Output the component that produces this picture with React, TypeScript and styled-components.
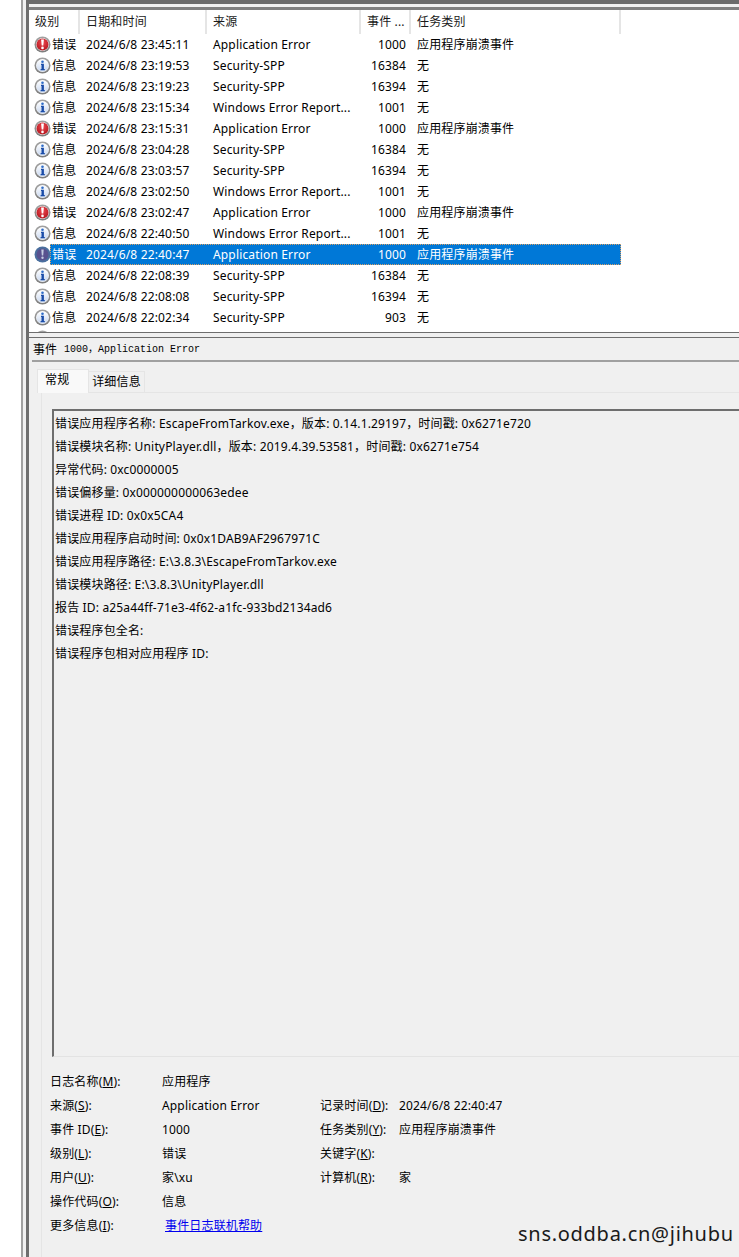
import styled, { createGlobalStyle } from "styled-components";

const GlobalStyle = createGlobalStyle`
  html, body {
    margin: 0;
    padding: 0;
    background: #fff;
  }
`;

const sans = `"Noto Sans", "Noto Sans CJK SC", sans-serif`;

const Page = styled.div`
  position: relative;
  width: 739px;
  height: 1257px;
  overflow: hidden;
  padding-left: 21px;
  box-sizing: border-box;
  background: #fff;
  font: 400 12px/1.3 ${sans};
  letter-spacing: 0.16px;
  color: #000;
`;

const Frame = styled.div`
  height: 100%;
  display: flex;
  flex-direction: column;
  box-sizing: border-box;
  padding-left: 3px;
  border-left: 2px solid #a0a0a0;
  background: #f0f0f0;
`;

const TopBar = styled.div`
  flex: none;
  height: 4px;
  background: #6b6b6b;
`;

const Shell = styled.div`
  flex: 1;
  min-height: 0;
  display: flex;
  flex-direction: column;
  padding-top: 3px;
  border-left: 3px solid #6e6e6e;
`;

const ListPane = styled.div`
  flex: none;
  height: 326px;
  box-sizing: border-box;
  border-top: 3px solid #808080;
  border-bottom: 1px solid #6e6e6e;
  background: #fff;
  overflow: hidden;
`;

const columns = "51px 127px 154px 50px 210px";

const HeaderRow = styled.div`
  display: grid;
  grid-template-columns: ${columns};
  width: 592px;
  height: 24px;
`;

const HeaderCell = styled.div`
  display: flex;
  align-items: center;
  padding-left: 6px;
  border-right: 2px solid #e5e5e5;
  color: #1a1a1a;
`;

const Row = styled.div<{ $selected?: boolean }>`
  position: relative;
  display: grid;
  grid-template-columns: ${columns};
  width: 592px;
  height: 21px;
  line-height: 21px;
  align-items: center;
  color: ${({ $selected }) => ($selected ? "#fff" : "#000")};
`;

const SelectionBar = styled.div`
  position: absolute;
  left: 21px;
  top: 0;
  right: 0;
  bottom: 0;
  box-sizing: border-box;
  background: #0078d7;
  border: 1px dotted #d9a066;
`;

const LevelCell = styled.div`
  position: relative;
  display: flex;
  align-items: center;
  gap: 1px;
  padding-left: 5px;
`;

const Cell = styled.div<{ $right?: boolean }>`
  position: relative;
  padding: 0 ${({ $right }) => ($right ? "5px" : "0")} 0 6px;
  text-align: ${({ $right }) => ($right ? "right" : "left")};
  white-space: nowrap;
`;

const Detail = styled.div`
  flex: 1;
  min-height: 0;
  display: flex;
  flex-direction: column;
  margin-top: 4px;
  border-top: 1px solid #6e6e6e;
`;

const TitleBar = styled.div`
  flex: none;
  height: 22px;
  display: flex;
  align-items: center;
  padding-left: 4px;
  white-space: nowrap;
`;

const TitleZh = styled.span`
  font: 400 12px/14px "Noto Sans CJK SC", sans-serif;
  letter-spacing: 0;
  margin-right: 7px;
`;

const TitleEvent = styled.span`
  font: 400 10px/14px "Liberation Mono", "Noto Sans CJK SC", monospace;
  letter-spacing: 0;
  margin-top: 2px;
`;

const TitleRule = styled.div`
  flex: none;
  height: 2px;
  margin-left: 3px;
  background: #a0a0a0;
`;

const Tabs = styled.div`
  flex: none;
  display: flex;
  align-items: flex-end;
  height: 30px;
  padding-left: 8px;
  box-sizing: border-box;
`;

const Tab = styled.div<{ $active?: boolean }>`
  box-sizing: border-box;
  display: flex;
  align-items: center;
  justify-content: ${({ $active }) => ($active ? "flex-start" : "center")};
  width: ${({ $active }) => ($active ? "52px" : "56px")};
  height: ${({ $active }) => ($active ? "24px" : "21px")};
  padding: ${({ $active }) => ($active ? "0 0 3px 7px" : "0")};
  margin-bottom: ${({ $active }) => ($active ? "-1px" : "0")};
  background: ${({ $active }) => ($active ? "#f9f9f9" : "#f0f0f0")};
  border: 1px solid #e5e5e5;
  border-bottom: none;
  border-left-width: ${({ $active }) => ($active ? "1px" : "0")};
  position: relative;
  z-index: 1;
`;

const TabBody = styled.div`
  flex: 1;
  min-height: 0;
  margin-left: 12px;
  padding: 16px 0 0 10px;
  border-top: 1px solid #e5e5e5;
  border-left: 1px solid #e5e5e5;
`;

const MessageBox = styled.div`
  box-sizing: border-box;
  height: 648px;
  padding: 1px 0 0 1px;
  border-top: 2px solid #6e6e6e;
  border-left: 2px solid #6e6e6e;
  border-bottom: 1px solid #e3e3e3;
`;

const MessageLine = styled.div`
  height: 23px;
  line-height: 23px;
  white-space: nowrap;
`;

const Fields = styled.div`
  display: grid;
  grid-template-columns: 112px 158px 79px 1fr;
  grid-auto-rows: 24px;
  align-items: center;
  margin: 13px 0 0 -2px;
`;

const HelpLink = styled.a`
  color: #0000ee;
  text-decoration: underline;
  margin-left: 3px;
`;

const Watermark = styled.div`
  position: absolute;
  left: 518px;
  top: 1221px;
  font: 400 20px/26px ${sans};
  letter-spacing: 0.72px;
  color: #1a1a1a;
`;

const IconDefs = () => (
  <svg width="0" height="0" style={{ position: "absolute" }}>
    <defs>
      <linearGradient id="ring" x1="0" y1="0" x2="0" y2="1">
        <stop offset="0" stopColor="#a2a2a2" />
        <stop offset="1" stopColor="#7c7c7c" />
      </linearGradient>
      <radialGradient id="red" cx="0.5" cy="0.35" r="0.7">
        <stop offset="0" stopColor="#ee4a50" />
        <stop offset="1" stopColor="#b0121b" />
      </radialGradient>
      <linearGradient id="pale" x1="0" y1="0" x2="0" y2="1">
        <stop offset="0" stopColor="#ffffff" />
        <stop offset="1" stopColor="#c9d8f0" />
      </linearGradient>
    </defs>
  </svg>
);

const LevelIcon = ({ kind }: { kind: "error" | "info" }) => (
  <svg width="17" height="17" viewBox="0 0 17 17" style={{ flex: "none" }}>
    <circle cx="8.5" cy="8.5" r="8" fill="url(#ring)" />
    <circle cx="8.5" cy="8.5" r="6.4" fill="#f6f6f6" />
    {kind === "error" ? (
      <>
        <circle cx="8.5" cy="8.5" r="6" fill="url(#red)" />
        <path d="M7.1 3.4h2.8l-.6 6.2H7.7z" fill="#fff" />
        <circle cx="8.5" cy="11.9" r="1.3" fill="#fff" />
      </>
    ) : (
      <>
        <circle cx="8.5" cy="8.5" r="6" fill="url(#pale)" />
        <circle cx="8.5" cy="4.8" r="1.3" fill="#2f6cc8" />
        <path d="M7 6.8h2.9v5.3h.9v1.1H6.6v-1.1h.9V7.9H7z" fill="#1a4ca8" />
      </>
    )}
  </svg>
);

const SelectedIcon = () => (
  <svg width="17" height="17" viewBox="0 0 17 17" style={{ flex: "none" }}>
    <circle cx="8.5" cy="8.5" r="8" fill="#4a6f9e" />
    <circle cx="8.5" cy="8.5" r="6" fill="#58518f" />
    <path d="M7.3 3.6h2.4l-.5 6H7.8z" fill="#c4cbe2" />
    <circle cx="8.5" cy="11.8" r="1.2" fill="#c4cbe2" />
  </svg>
);

type EventRow = [string, string, string, string, string];

const E = "Application Error";
const S = "Security-SPP";
const W = "Windows Error Report...";
const C = "应用程序崩溃事件";

const rows: EventRow[] = [
  ["错误", "2024/6/8 23:45:11", E, "1000", C],
  ["信息", "2024/6/8 23:19:53", S, "16384", "无"],
  ["信息", "2024/6/8 23:19:23", S, "16394", "无"],
  ["信息", "2024/6/8 23:15:34", W, "1001", "无"],
  ["错误", "2024/6/8 23:15:31", E, "1000", C],
  ["信息", "2024/6/8 23:04:28", S, "16384", "无"],
  ["信息", "2024/6/8 23:03:57", S, "16394", "无"],
  ["信息", "2024/6/8 23:02:50", W, "1001", "无"],
  ["错误", "2024/6/8 23:02:47", E, "1000", C],
  ["信息", "2024/6/8 22:40:50", W, "1001", "无"],
  ["错误", "2024/6/8 22:40:47", E, "1000", C],
  ["信息", "2024/6/8 22:08:39", S, "16384", "无"],
  ["信息", "2024/6/8 22:08:08", S, "16394", "无"],
  ["信息", "2024/6/8 22:02:34", S, "903", "无"],
];

const SELECTED = 10;

const message = [
  "错误应用程序名称: EscapeFromTarkov.exe，版本: 0.14.1.29197，时间戳: 0x6271e720",
  "错误模块名称: UnityPlayer.dll，版本: 2019.4.39.53581，时间戳: 0x6271e754",
  "异常代码: 0xc0000005",
  "错误偏移量: 0x000000000063edee",
  "错误进程 ID: 0x0x5CA4",
  "错误应用程序启动时间: 0x0x1DAB9AF2967971C",
  "错误应用程序路径: E:\\3.8.3\\EscapeFromTarkov.exe",
  "错误模块路径: E:\\3.8.3\\UnityPlayer.dll",
  "报告 ID: a25a44ff-71e3-4f62-a1fc-933bd2134ad6",
  "错误程序包全名:",
  "错误程序包相对应用程序 ID:",
];

const Label = ({ text, keyChar }: { text: string; keyChar: string }) => (
  <div>
    {text}(<u>{keyChar}</u>):
  </div>
);

const App = () => (
  <Page>
    <GlobalStyle />
    <IconDefs />
    <Frame>
      <TopBar />
      <Shell>
        <ListPane>
          <HeaderRow>
            <HeaderCell>级别</HeaderCell>
            <HeaderCell>日期和时间</HeaderCell>
            <HeaderCell>来源</HeaderCell>
            <HeaderCell>事件 ...</HeaderCell>
            <HeaderCell>任务类别</HeaderCell>
          </HeaderRow>
          {rows.map((r, i) => (
            <Row key={i} $selected={i === SELECTED}>
              {i === SELECTED && <SelectionBar />}
              <LevelCell>
                {i === SELECTED ? (
                  <SelectedIcon />
                ) : (
                  <LevelIcon kind={r[0] === "错误" ? "error" : "info"} />
                )}
                {r[0]}
              </LevelCell>
              <Cell>{r[1]}</Cell>
              <Cell>{r[2]}</Cell>
              <Cell $right>{r[3]}</Cell>
              <Cell>{r[4]}</Cell>
            </Row>
          ))}
          <Row>
            <LevelCell>
              <LevelIcon kind="info" />
            </LevelCell>
          </Row>
        </ListPane>
        <Detail>
          <TitleBar>
            <TitleZh>事件</TitleZh>
            <TitleEvent>1000，Application Error</TitleEvent>
          </TitleBar>
          <TitleRule />
          <Tabs>
            <Tab $active>常规</Tab>
            <Tab>详细信息</Tab>
          </Tabs>
          <TabBody>
            <MessageBox>
              {message.map((line) => (
                <MessageLine key={line}>{line}</MessageLine>
              ))}
            </MessageBox>
            <Fields>
              <Label text="日志名称" keyChar="M" />
              <div>应用程序</div>
              <div />
              <div />
              <Label text="来源" keyChar="S" />
              <div>Application Error</div>
              <Label text="记录时间" keyChar="D" />
              <div>2024/6/8 22:40:47</div>
              <Label text="事件 ID" keyChar="E" />
              <div>1000</div>
              <Label text="任务类别" keyChar="Y" />
              <div>应用程序崩溃事件</div>
              <Label text="级别" keyChar="L" />
              <div>错误</div>
              <Label text="关键字" keyChar="K" />
              <div />
              <Label text="用户" keyChar="U" />
              <div>家\xu</div>
              <Label text="计算机" keyChar="R" />
              <div>家</div>
              <Label text="操作代码" keyChar="O" />
              <div>信息</div>
              <div />
              <div />
              <Label text="更多信息" keyChar="I" />
              <div>
                <HelpLink href="#">事件日志联机帮助</HelpLink>
              </div>
            </Fields>
          </TabBody>
        </Detail>
      </Shell>
    </Frame>
    <Watermark>sns.oddba.cn@jihubu</Watermark>
  </Page>
);

export default App;
